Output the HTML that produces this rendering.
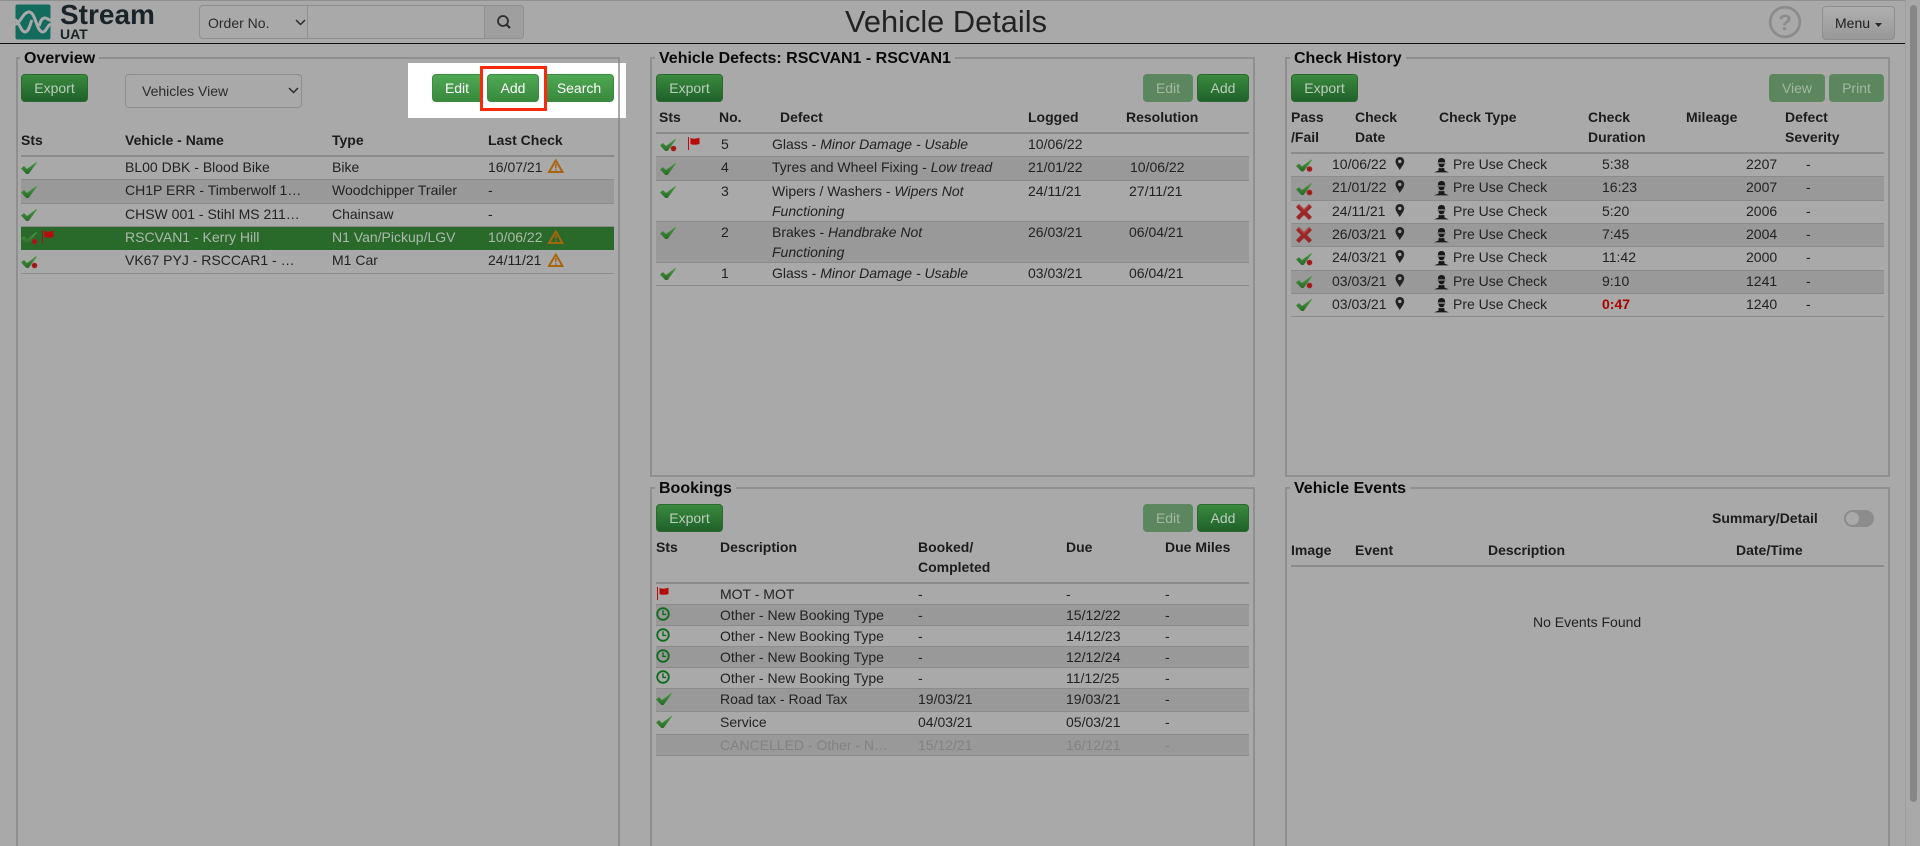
<!DOCTYPE html>
<html lang="en"><head><meta charset="utf-8"><title>Vehicle Details</title>
<style>
html,body{margin:0;padding:0;width:1920px;height:846px;overflow:hidden;background:#a9a9a9}
body{position:relative;font-family:"Liberation Sans",Arial,sans-serif;font-size:14px;color:#222}
div,span.t{position:absolute}
.t{white-space:nowrap;line-height:20px;font-size:14px;color:#222}
.b{font-weight:bold;color:#1c1c1c}
i.x{font-style:italic}
.f{border:2px solid #8f8f8f;box-sizing:border-box}
.o{border-bottom:none}
.lg{position:absolute;font-weight:bold;font-size:16px;line-height:20px;color:#0a0a0a;background:#a9a9a9;padding:0 4px;white-space:nowrap}
.ln{height:1px;background:#8b8b8b}
.hl{height:2px;background:#8b8b8b}
.s{background:#999}
.L{left:21px;width:593px}.M{left:656px;width:593px}.R{left:1291px;width:593px}
.btn{box-sizing:border-box;height:28px;border-radius:4px;text-align:center;line-height:26px;font-size:14px;border:1px solid #2b6a2e}
.dk{background:linear-gradient(#3a8a3e,#20612a);color:#bccdbd;border-color:#2a6a2e}
.ds{background:#5b865e;color:#a3b8a4;border-color:#5d8860}
.hi{background:linear-gradient(#4fa954,#38893c);color:#fff;border-color:#3d8a41}
</style></head><body>

<!-- header -->
<div style="left:0;top:0;width:1906px;height:1px;background:#8f8f8f"></div>
<div style="left:0;top:43px;width:1905px;height:1px;background:#0e0e0e"></div>

<span class="t" style="left:60px;top:-1px;font-size:28px;line-height:32px;font-weight:bold;color:#1a2428">Stream</span>
<span class="t" style="left:60px;top:24px;font-size:14px;line-height:20px;font-weight:bold;color:#1a2428">UAT</span>

<div style="left:199px;top:5px;width:325px;height:34px;box-sizing:border-box;border:1px solid #8e8e8e;border-radius:4px"></div>
<div style="left:307px;top:6px;width:1px;height:32px;background:#8e8e8e"></div>
<div style="left:484px;top:6px;width:39px;height:32px;background:#9f9f9f;border-left:1px solid #8e8e8e;box-sizing:border-box;border-radius:0 3px 3px 0"></div>
<span class="t" style="left:208px;top:13px;color:#2b2b2b">Order No.</span>

<span class="t" style="left:845px;top:3px;font-size:30.8px;line-height:38px;color:#222">Vehicle Details</span>

<div style="left:1822px;top:6px;width:73px;height:34px;box-sizing:border-box;border:1px solid #8e8e8e;border-radius:4px;background:linear-gradient(#afafaf,#989898)"></div>
<span class="t" style="left:1835px;top:13px;color:#1e1e1e">Menu</span>

<!-- scrollbar -->
<div style="left:1905px;top:0;width:15px;height:846px;background:#a9a9a9;border-left:1px solid #9c9c9c;box-sizing:border-box"></div>
<div style="left:1910px;top:5px;width:7px;height:797px;background:#868686;border-radius:4px"></div>

<!-- OVERVIEW -->
<div style="left:408px;top:63px;width:218px;height:55px;background:#fff"></div>
<div class="f o" style="left:16px;top:57px;width:604px;height:789px"></div>
<div style="left:618px;top:63px;width:2px;height:55px;background:#aaa"></div>
<span class="lg" style="left:20px;top:49px">Overview</span>

<div class="btn dk" style="left:21px;top:74px;width:67px">Export</div>
<div style="left:125px;top:74px;width:177px;height:34px;box-sizing:border-box;border:1px solid #8e8e8e;border-radius:4px"></div>
<span class="t" style="left:142px;top:81px;color:#2b2b2b">Vehicles View</span>

<div class="btn hi" style="left:432px;top:74px;width:50px;border-radius:4px 0 0 4px">Edit</div>
<div class="btn hi" style="left:546px;top:74px;width:68px;border-radius:0 4px 4px 0;padding-right:2px">Search</div>
<div style="left:480px;top:66px;width:67px;height:45px;box-sizing:border-box;border:3px solid #f92a0c;background:#fff"></div>
<div class="btn hi" style="left:487px;top:74px;width:52px">Add</div>

<span class="t b" style="left:21px;top:130px">Sts</span>
<span class="t b" style="left:125px;top:130px">Vehicle - Name</span>
<span class="t b" style="left:332px;top:130px">Type</span>
<span class="t b" style="left:488px;top:130px">Last Check</span>
<div class="hl L" style="top:155px"></div>
<div class="s L" style="top:180px;height:23px"></div>
<div style="left:21px;width:593px;top:227px;height:23px;background:#296a2b"></div>
<div class="ln L" style="top:179px"></div><div class="ln L" style="top:203px"></div><div class="ln L" style="top:226px"></div><div class="ln L" style="top:273px"></div>

<span class="t" style="left:125px;top:157px">BL00 DBK - Blood Bike</span><span class="t" style="left:332px;top:157px">Bike</span><span class="t" style="left:488px;top:157px">16/07/21</span>
<span class="t" style="left:125px;top:180px">CH1P ERR - Timberwolf 1…</span><span class="t" style="left:332px;top:180px">Woodchipper Trailer</span><span class="t" style="left:488px;top:180px">-</span>
<span class="t" style="left:125px;top:204px">CHSW 001 - Stihl MS 211…</span><span class="t" style="left:332px;top:204px">Chainsaw</span><span class="t" style="left:488px;top:204px">-</span>
<span class="t" style="left:125px;top:227px;color:#adb9ad">RSCVAN1 - Kerry Hill</span><span class="t" style="left:332px;top:227px;color:#adb9ad">N1 Van/Pickup/LGV</span><span class="t" style="left:488px;top:227px;color:#adb9ad">10/06/22</span>
<span class="t" style="left:125px;top:250px">VK67 PYJ - RSCCAR1 - …</span><span class="t" style="left:332px;top:250px">M1 Car</span><span class="t" style="left:488px;top:250px">24/11/21</span>

<!-- VEHICLE DEFECTS -->
<div class="f" style="left:650px;top:57px;width:605px;height:420px"></div>
<span class="lg" style="left:655px;top:49px">Vehicle Defects: RSCVAN1 - RSCVAN1</span>
<div class="btn dk" style="left:656px;top:74px;width:67px">Export</div>
<div class="btn ds" style="left:1143px;top:74px;width:50px">Edit</div>
<div class="btn dk" style="left:1197px;top:74px;width:52px">Add</div>

<span class="t b" style="left:659px;top:107px">Sts</span>
<span class="t b" style="left:719px;top:107px">No.</span>
<span class="t b" style="left:780px;top:107px">Defect</span>
<span class="t b" style="left:1028px;top:107px">Logged</span>
<span class="t b" style="left:1126px;top:107px">Resolution</span>
<div class="hl M" style="top:132px"></div>
<div class="s M" style="top:157px;height:23px"></div>
<div class="s M" style="top:222px;height:40px"></div>
<div class="ln M" style="top:156px"></div><div class="ln M" style="top:180px"></div><div class="ln M" style="top:221px"></div><div class="ln M" style="top:262px"></div><div class="ln M" style="top:285px"></div>

<span class="t" style="left:721px;top:134px">5</span><span class="t" style="left:772px;top:134px">Glass - <i class="x">Minor Damage - Usable</i></span><span class="t" style="left:1028px;top:134px">10/06/22</span>
<span class="t" style="left:721px;top:157px">4</span><span class="t" style="left:772px;top:157px">Tyres and Wheel Fixing - <i class="x">Low tread</i></span><span class="t" style="left:1028px;top:157px">21/01/22</span><span class="t" style="left:1130px;top:157px">10/06/22</span>
<span class="t" style="left:721px;top:181px">3</span><span class="t" style="left:772px;top:181px">Wipers / Washers - <i class="x">Wipers Not</i></span><span class="t" style="left:772px;top:201px"><i class="x">Functioning</i></span><span class="t" style="left:1028px;top:181px">24/11/21</span><span class="t" style="left:1129px;top:181px">27/11/21</span>
<span class="t" style="left:721px;top:222px">2</span><span class="t" style="left:772px;top:222px">Brakes - <i class="x">Handbrake Not</i></span><span class="t" style="left:772px;top:242px"><i class="x">Functioning</i></span><span class="t" style="left:1028px;top:222px">26/03/21</span><span class="t" style="left:1129px;top:222px">06/04/21</span>
<span class="t" style="left:721px;top:263px">1</span><span class="t" style="left:772px;top:263px">Glass - <i class="x">Minor Damage - Usable</i></span><span class="t" style="left:1028px;top:263px">03/03/21</span><span class="t" style="left:1129px;top:263px">06/04/21</span>

<!-- BOOKINGS -->
<div class="f o" style="left:650px;top:487px;width:605px;height:359px"></div>
<span class="lg" style="left:655px;top:479px">Bookings</span>
<div class="btn dk" style="left:656px;top:504px;width:67px">Export</div>
<div class="btn ds" style="left:1143px;top:504px;width:50px">Edit</div>
<div class="btn dk" style="left:1197px;top:504px;width:52px">Add</div>

<span class="t b" style="left:656px;top:537px">Sts</span>
<span class="t b" style="left:720px;top:537px">Description</span>
<span class="t b" style="left:918px;top:537px">Booked/</span><span class="t b" style="left:918px;top:557px">Completed</span>
<span class="t b" style="left:1066px;top:537px">Due</span>
<span class="t b" style="left:1165px;top:537px">Due Miles</span>
<div class="hl M" style="top:582px"></div>
<div class="s M" style="top:605px;height:20px"></div>
<div class="s M" style="top:647px;height:20px"></div>
<div class="s M" style="top:689px;height:22px"></div>
<div class="s M" style="top:735px;height:20px"></div>
<div class="ln M" style="top:604px"></div><div class="ln M" style="top:625px"></div><div class="ln M" style="top:646px"></div><div class="ln M" style="top:667px"></div><div class="ln M" style="top:688px"></div><div class="ln M" style="top:711px"></div><div class="ln M" style="top:734px"></div><div class="ln M" style="top:755px"></div>

<span class="t" style="left:720px;top:584px">MOT - MOT</span><span class="t" style="left:918px;top:584px">-</span><span class="t" style="left:1066px;top:584px">-</span><span class="t" style="left:1165px;top:584px">-</span>
<span class="t" style="left:720px;top:605px">Other - New Booking Type</span><span class="t" style="left:918px;top:605px">-</span><span class="t" style="left:1066px;top:605px">15/12/22</span><span class="t" style="left:1165px;top:605px">-</span>
<span class="t" style="left:720px;top:626px">Other - New Booking Type</span><span class="t" style="left:918px;top:626px">-</span><span class="t" style="left:1066px;top:626px">14/12/23</span><span class="t" style="left:1165px;top:626px">-</span>
<span class="t" style="left:720px;top:647px">Other - New Booking Type</span><span class="t" style="left:918px;top:647px">-</span><span class="t" style="left:1066px;top:647px">12/12/24</span><span class="t" style="left:1165px;top:647px">-</span>
<span class="t" style="left:720px;top:668px">Other - New Booking Type</span><span class="t" style="left:918px;top:668px">-</span><span class="t" style="left:1066px;top:668px">11/12/25</span><span class="t" style="left:1165px;top:668px">-</span>
<span class="t" style="left:720px;top:689px">Road tax - Road Tax</span><span class="t" style="left:918px;top:689px">19/03/21</span><span class="t" style="left:1066px;top:689px">19/03/21</span><span class="t" style="left:1165px;top:689px">-</span>
<span class="t" style="left:720px;top:712px">Service</span><span class="t" style="left:918px;top:712px">04/03/21</span><span class="t" style="left:1066px;top:712px">05/03/21</span><span class="t" style="left:1165px;top:712px">-</span>
<span class="t" style="left:720px;top:735px;color:#828282">CANCELLED - Other - N…</span><span class="t" style="left:918px;top:735px;color:#828282">15/12/21</span><span class="t" style="left:1066px;top:735px;color:#828282">16/12/21</span><span class="t" style="left:1165px;top:735px;color:#828282">-</span>

<!-- CHECK HISTORY -->
<div class="f" style="left:1285px;top:57px;width:605px;height:420px"></div>
<span class="lg" style="left:1290px;top:49px">Check History</span>
<div class="btn dk" style="left:1291px;top:74px;width:67px">Export</div>
<div class="btn ds" style="left:1769px;top:74px;width:56px">View</div>
<div class="btn ds" style="left:1829px;top:74px;width:55px">Print</div>

<span class="t b" style="left:1291px;top:107px">Pass</span><span class="t b" style="left:1291px;top:127px">/Fail</span>
<span class="t b" style="left:1355px;top:107px">Check</span><span class="t b" style="left:1355px;top:127px">Date</span>
<span class="t b" style="left:1439px;top:107px">Check Type</span>
<span class="t b" style="left:1588px;top:107px">Check</span><span class="t b" style="left:1588px;top:127px">Duration</span>
<span class="t b" style="left:1686px;top:107px">Mileage</span>
<span class="t b" style="left:1785px;top:107px">Defect</span><span class="t b" style="left:1785px;top:127px">Severity</span>
<div class="hl R" style="top:152px"></div>
<div class="s R" style="top:177px;height:23px"></div>
<div class="s R" style="top:224px;height:22px"></div>
<div class="s R" style="top:271px;height:22px"></div>
<div class="ln R" style="top:176px"></div><div class="ln R" style="top:200px"></div><div class="ln R" style="top:223px"></div><div class="ln R" style="top:246px"></div><div class="ln R" style="top:270px"></div><div class="ln R" style="top:293px"></div><div class="ln R" style="top:316px"></div>

<span class="t" style="left:1332px;top:154px">10/06/22</span><span class="t" style="left:1453px;top:154px">Pre Use Check</span><span class="t" style="left:1602px;top:154px">5:38</span><span class="t" style="left:1746px;top:154px">2207</span><span class="t" style="left:1806px;top:154px">-</span>
<span class="t" style="left:1332px;top:177px">21/01/22</span><span class="t" style="left:1453px;top:177px">Pre Use Check</span><span class="t" style="left:1602px;top:177px">16:23</span><span class="t" style="left:1746px;top:177px">2007</span><span class="t" style="left:1806px;top:177px">-</span>
<span class="t" style="left:1332px;top:201px">24/11/21</span><span class="t" style="left:1453px;top:201px">Pre Use Check</span><span class="t" style="left:1602px;top:201px">5:20</span><span class="t" style="left:1746px;top:201px">2006</span><span class="t" style="left:1806px;top:201px">-</span>
<span class="t" style="left:1332px;top:224px">26/03/21</span><span class="t" style="left:1453px;top:224px">Pre Use Check</span><span class="t" style="left:1602px;top:224px">7:45</span><span class="t" style="left:1746px;top:224px">2004</span><span class="t" style="left:1806px;top:224px">-</span>
<span class="t" style="left:1332px;top:247px">24/03/21</span><span class="t" style="left:1453px;top:247px">Pre Use Check</span><span class="t" style="left:1602px;top:247px">11:42</span><span class="t" style="left:1746px;top:247px">2000</span><span class="t" style="left:1806px;top:247px">-</span>
<span class="t" style="left:1332px;top:271px">03/03/21</span><span class="t" style="left:1453px;top:271px">Pre Use Check</span><span class="t" style="left:1602px;top:271px">9:10</span><span class="t" style="left:1746px;top:271px">1241</span><span class="t" style="left:1806px;top:271px">-</span>
<span class="t" style="left:1332px;top:294px">03/03/21</span><span class="t" style="left:1453px;top:294px">Pre Use Check</span><span class="t" style="left:1602px;top:294px;color:#a80000;font-weight:bold">0:47</span><span class="t" style="left:1746px;top:294px">1240</span><span class="t" style="left:1806px;top:294px">-</span>

<!-- VEHICLE EVENTS -->
<div class="f o" style="left:1285px;top:487px;width:605px;height:359px"></div>
<span class="lg" style="left:1290px;top:479px">Vehicle Events</span>
<span class="t b" style="left:1712px;top:508px">Summary/Detail</span>
<div style="left:1844px;top:510px;width:30px;height:17px;border-radius:9px;background:#8c8c8c"></div>
<div style="left:1846px;top:512px;width:13px;height:13px;border-radius:50%;background:#a9a9a9"></div>
<span class="t b" style="left:1291px;top:540px">Image</span>
<span class="t b" style="left:1355px;top:540px">Event</span>
<span class="t b" style="left:1488px;top:540px">Description</span>
<span class="t b" style="left:1736px;top:540px">Date/Time</span>
<div class="hl R" style="top:565px"></div>
<span class="t" style="left:1533px;top:612px">No Events Found</span>

<!-- icons -->
<svg width="1920" height="846" style="position:absolute;left:0;top:0;pointer-events:none" xmlns="http://www.w3.org/2000/svg">
<defs>
<linearGradient id="cg" x1="0" y1="0" x2="0" y2="1"><stop offset="0" stop-color="#4c9a42"/><stop offset="1" stop-color="#276a28"/></linearGradient>
<g id="chk"><path d="M0 6.5 L3 4 L6 7 L15.3 0 L16 .6 L7.6 12 L5.4 12 Z" fill="url(#cg)"/></g>
<g id="chr"><path d="M0 6.5 L3 4 L6 7 L15.3 0 L16 .6 L7.6 12 L5.4 12 Z" fill="url(#cg)"/><circle cx="13.500" cy="9.500" r="2.800" fill="#a81c1c"/><circle cx="13.500" cy="9.500" r=".8" fill="#7c1010"/></g>
<g id="flg"><rect x="0" y="0" width="1" height="13" fill="#b30d0d"/><path d="M2.500 1 Q6 2.500 11.500 .8 L11.500 7 Q6 8.500 2.500 7 Z" fill="#b80b0b"/></g>
<g id="clk"><circle cx="7" cy="7" r="5.800" fill="none" stroke="#0e6a1c" stroke-width="1.800"/><path d="M7 3.300 V7.400 H10.200" fill="none" stroke="#0e6a1c" stroke-width="1.400"/></g>
<g id="wrn"><path d="M7.800 1.500 L14.500 13 H1 Z" fill="none" stroke="#a8650f" stroke-width="2" stroke-linejoin="miter"/><path d="M7.800 5 V9.300 M7.800 10.300 V11.800" stroke="#a8650f" stroke-width="1.500"/></g>
<g id="xx"><path d="M3 0 L8 5 L13 0 L16 3 L11 8 L16 13 L13 16 L8 11 L3 16 L0 13 L5 8 L0 3 Z" fill="#9c2727"/><path d="M3 0 L8 5 L13 0 L14 1 L8 7 L2 1 Z" fill="#b24040"/></g>
<g id="pin"><path fill-rule="evenodd" d="M4.300 0 C7 0 8.700 2 8.700 4.400 C8.700 7.400 5.600 10.400 4.300 13 C3 10.400 0 7.400 0 4.400 C0 2 1.700 0 4.300 0 Z M4.300 2.700 A1.700 1.700 0 1 0 4.300 6.100 A1.700 1.700 0 1 0 4.300 2.700 Z" fill="#232323"/></g>
<g id="psn"><path d="M7.500 0 C10 0 11 1.600 11 3.200 L11 4 L4 4 L4 3.200 C4 1.600 5 0 7.500 0 Z" fill="#181818"/><path d="M3.600 4.600 H11.400 V5.400 H3.600 Z" fill="#181818"/><path d="M4.500 6 H10.500 C10.500 8 9.500 9.300 7.500 9.300 C5.500 9.300 4.500 8 4.500 6 Z" fill="#181818"/><path d="M4.800 9.600 C5.600 10.400 9.400 10.400 10.200 9.600 L10.600 12.600 L15 14.400 H0 L4.400 12.600 Z" fill="#181818"/></g>
</defs>

<!-- logo -->
<rect x="15.500" y="4.500" width="35" height="35" rx="2" fill="#136b5d"/>
<g fill="none" stroke="#a9a9a9" stroke-width="3">
<path d="M15.500 24 C20 24 23 12 29 12 C36 12 36 32 43 32 C46 32 47 26 50.500 24"/>
<path d="M15.500 20 C18 20 21 32 25 32 C29 32 30 24 32 20"/>
<path d="M39 26 C41 20 42 18 45 18 C47 18 48 20 50.500 20"/>
</g>

<!-- header glyphs -->
<path d="M296 20 L300.500 24.500 L305 20" fill="none" stroke="#2b2b2b" stroke-width="1.500"/>
<circle cx="503" cy="21" r="5" fill="none" stroke="#2e2e2e" stroke-width="1.800"/><path d="M506.500 24.500 L510 28" stroke="#2e2e2e" stroke-width="2.200"/>
<circle cx="1785" cy="22" r="14.800" fill="none" stroke="#8c8c8c" stroke-width="2.800"/>
<text x="1785" y="30" text-anchor="middle" font-family="Liberation Sans" font-size="22" font-weight="bold" fill="#8c8c8c">?</text>
<path d="M1875 23 H1882 L1878.500 27 Z" fill="#2a2a2a"/>
<path d="M289 88 L293.500 92.500 L298 88" fill="none" stroke="#2b2b2b" stroke-width="1.500"/>

<!-- overview icons -->
<use href="#chk" x="21" y="162"/><use href="#chk" x="21" y="186"/><use href="#chk" x="21" y="209"/>
<use href="#chr" x="21" y="232"/><use href="#flg" x="42" y="230"/><use href="#chr" x="21" y="256"/>
<use href="#wrn" x="548" y="159"/><use href="#wrn" x="548" y="230"/><use href="#wrn" x="548" y="253"/>

<!-- defects icons -->
<use href="#chr" x="660" y="139"/><use href="#flg" x="688" y="137"/>
<use href="#chk" x="660" y="163"/><use href="#chk" x="660" y="186"/><use href="#chk" x="660" y="227"/><use href="#chk" x="660" y="268"/>

<!-- bookings icons -->
<use href="#flg" x="657" y="587"/>
<use href="#clk" x="656" y="607"/><use href="#clk" x="656" y="628"/><use href="#clk" x="656" y="649"/><use href="#clk" x="656" y="670"/>
<use href="#chk" x="656" y="693"/><use href="#chk" x="656" y="716"/>

<!-- history icons -->
<use href="#chr" x="1296" y="159.500"/><use href="#chr" x="1296" y="183"/>
<use href="#xx" x="1296" y="204"/><use href="#xx" x="1296" y="227"/>
<use href="#chr" x="1296" y="253"/><use href="#chr" x="1296" y="276"/><use href="#chk" x="1296" y="299"/>
<use href="#pin" x="1395.500" y="157"/><use href="#pin" x="1395.500" y="180"/><use href="#pin" x="1395.500" y="204"/><use href="#pin" x="1395.500" y="227"/><use href="#pin" x="1395.500" y="250"/><use href="#pin" x="1395.500" y="274"/><use href="#pin" x="1395.500" y="297"/>
<use href="#psn" x="1434" y="158"/><use href="#psn" x="1434" y="181"/><use href="#psn" x="1434" y="205"/><use href="#psn" x="1434" y="228"/><use href="#psn" x="1434" y="251"/><use href="#psn" x="1434" y="275"/><use href="#psn" x="1434" y="298"/>
</svg>
</body></html>
